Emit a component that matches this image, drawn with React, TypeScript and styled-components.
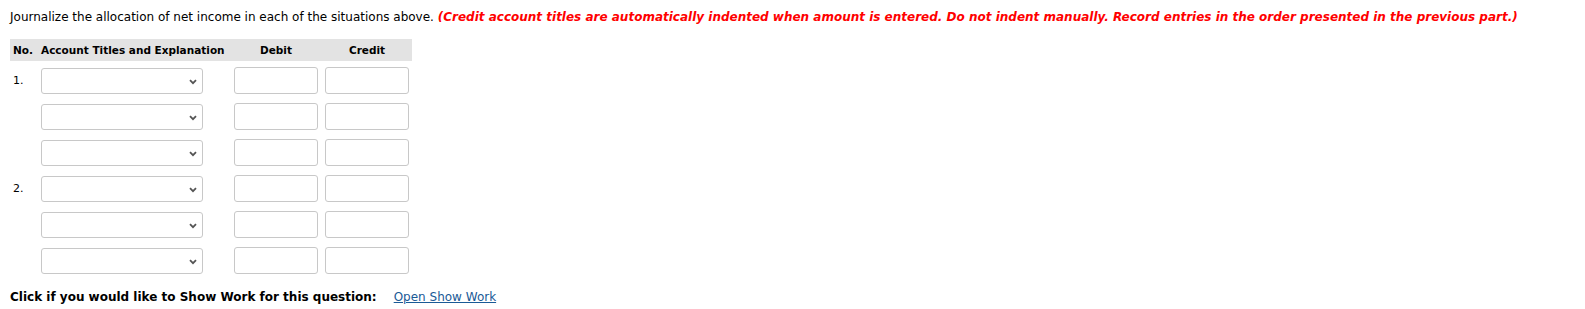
import React from "react";
import styled, { createGlobalStyle } from "styled-components";

const GlobalStyle = createGlobalStyle`
  body {
    margin: 0;
    background: #ffffff;
    font-family: "DejaVu Sans", Verdana, sans-serif;
    color: #000000;
  }
`;

const Page = styled.div`
  padding: 10px 10px 0 10px;
`;

const Instructions = styled.p`
  margin: 0 0 14px 0;
  font-size: 12px;
  line-height: 15px;
  white-space: nowrap;
`;

const Warning = styled.span`
  color: #ff0000;
  font-weight: 700;
  font-style: italic;
`;

const Journal = styled.div`
  width: 402px;
`;

const Row = styled.div<{ $header?: boolean }>`
  display: grid;
  grid-template-columns: 31px 188px 91px 92px;
  align-items: center;
  height: ${(p) => (p.$header ? "22px" : "26px")};
  margin-bottom: ${(p) => (p.$header ? "6px" : "10px")};
  background: ${(p) => (p.$header ? "#e3e3e3" : "transparent")};
  font-size: ${(p) => (p.$header ? "10.5px" : "11px")};
  font-weight: ${(p) => (p.$header ? 700 : 400)};
  white-space: nowrap;
`;

const NoCell = styled.div`
  padding-left: 3px;
`;

const AmountHead = styled.div`
  padding-left: 5px;
  width: 84px;
  text-align: center;
`;

const SelectBox = styled.div`
  position: relative;
  width: 162px;
  height: 26px;
  box-sizing: border-box;
  border: 1px solid #c8c8c8;
  border-radius: 3px;
  background: #ffffff;
`;

const Chevron = styled.svg`
  position: absolute;
  right: 5px;
  top: 10px;
`;

const AmountCell = styled.div`
  padding-left: 5px;
`;

const AmountInput = styled.input`
  display: block;
  width: 84px;
  height: 27px;
  box-sizing: border-box;
  border: 1px solid #c8c8c8;
  border-radius: 3px;
  background: #ffffff;
  outline: none;
  padding: 0 4px;
`;

const Footer = styled.div`
  margin-top: 17px;
  font-size: 12px;
  line-height: 15px;
  white-space: nowrap;
`;

const FooterLabel = styled.span`
  font-weight: 700;
`;

const ShowWorkLink = styled.a`
  margin-left: 17px;
  color: #1a5a96;
  text-decoration: underline;
`;

const entries = [
  { no: "1." },
  { no: "" },
  { no: "" },
  { no: "2." },
  { no: "" },
  { no: "" },
];

const JournalRow: React.FC<{ no: string }> = ({ no }) => (
  <Row>
    <NoCell>{no}</NoCell>
    <div>
      <SelectBox>
        <Chevron width="8" height="6" viewBox="0 0 8 6">
          <path d="M1 1.2 L4 4.2 L7 1.2" fill="none" stroke="#555555" strokeWidth="1.8" />
        </Chevron>
      </SelectBox>
    </div>
    <AmountCell>
      <AmountInput type="text" />
    </AmountCell>
    <AmountCell>
      <AmountInput type="text" />
    </AmountCell>
  </Row>
);

const App: React.FC = () => {
  return (
    <Page>
      <GlobalStyle />
      <Instructions>
        Journalize the allocation of net income in each of the situations above.{" "}
        <Warning>
          (Credit account titles are automatically indented when amount is entered. Do not indent
          manually. Record entries in the order presented in the previous part.)
        </Warning>
      </Instructions>
      <Journal>
        <Row $header>
          <NoCell>No.</NoCell>
          <div>Account Titles and Explanation</div>
          <AmountHead>Debit</AmountHead>
          <AmountHead>Credit</AmountHead>
        </Row>
        {entries.map((e, i) => (
          <JournalRow key={i} no={e.no} />
        ))}
      </Journal>
      <Footer>
        <FooterLabel>Click if you would like to Show Work for this question:</FooterLabel>
        <ShowWorkLink href="#">Open Show Work</ShowWorkLink>
      </Footer>
    </Page>
  );
};

export default App;
